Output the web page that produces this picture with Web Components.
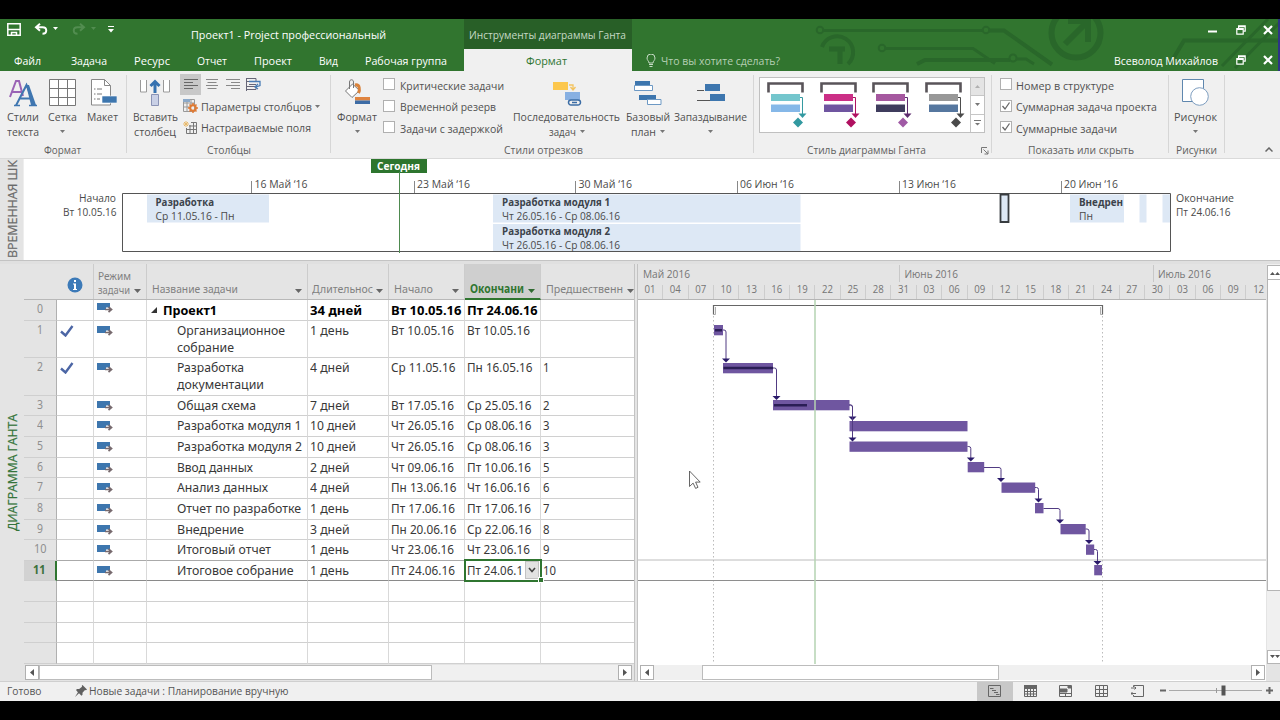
<!DOCTYPE html>
<html lang="ru">
<head>
<meta charset="utf-8">
<title>Проект1 - Project профессиональный</title>
<style>
  html, body { margin: 0; background: #000; }
  body { width: 1280px; height: 720px; overflow: hidden; font-family: "Open Sans", "Noto Sans", sans-serif; }
</style>
</head>
<body>
<project-app></project-app>

<script>
// shared base: renders its markup once into an open shadow root
class BaseElement extends HTMLElement {
  connectedCallback() {
    if (this.shadowRoot) return;
    this.attachShadow({ mode: 'open' });
    this.shadowRoot.innerHTML = this.render();
  }
  attr(name, fallback = '') {
    return this.getAttribute(name) || fallback;
  }
}

const label = (text, w, css = '') => `<fit-label w="${w}" style="${css}">${text}</fit-label>`;
const caret = (css = '') => `<svg width="5" height="3" style="flex:none;${css}"><path d="M0 0h5L2.500 3z" fill="#777"/></svg>`;

/* ---------- title bar and tabs ---------- */

const restoreIcon = `<svg width="10" height="10" viewBox="0 0 10 10" fill="none" stroke="#fff" stroke-width="1.200"><path d="M2.600 3V.8h6.600v5.400H7.500M2.600 1.600h6.600"/><path d="M.8 3.600h6.400v5.600H.8zM.8 4.400h6.400"/></svg>`;
const closeIcon = `<svg width="10" height="10" viewBox="0 0 10 10"><path d="M1 1l8 8M9 1L1 9" stroke="#fff" stroke-width="2.200"/></svg>`;

class TitleBar extends BaseElement {
  render() {
    return `
      <style>
        :host { display: block; position: relative; height: 52px; background: #31752f; color: #fff; font-size: 11.500px; overflow: hidden; }
        .row { display: flex; position: relative; }
        .top { height: 30px; }
        .tabs { height: 22px; align-items: center; }
        .quick { display: flex; width: 190.500px; padding-left: 7px; box-sizing: border-box; }
        .quick svg { flex: none; margin-top: 4px; }
        .name { width: 273.500px; padding-top: 8px; line-height: 16px; }
        .context { width: 168px; box-sizing: border-box; background: #285f27; color: #c6dac5; padding: 8px 0 0 5px; line-height: 16px; }
        .active { width: 168px; height: 22px; background: #f0f0f0; color: #2f7530; display: flex; align-items: center; justify-content: center; margin-left: 17px; padding-right: 3px; box-sizing: border-box; }
        .window { display: flex; align-items: center; }
        .deco { position: absolute; left: 800px; top: 0; }
        .edge { position: absolute; right: 0; top: 0; width: 2px; height: 52px; background: #2d3486; }
      </style>
      <svg class="deco" width="480" height="52" viewBox="800 19 480 52" fill="none" stroke="#29672a" stroke-width="3">
        <circle cx="820" cy="30" r="3.300" stroke-width="2"/><path d="M823 30.500h160"/>
        <circle cx="986" cy="30" r="3.300" stroke-width="2"/><path d="M989 30.500h15l48 34" stroke-width="4"/>
        <circle cx="882" cy="48" r="3.300" stroke-width="2"/><path d="M885 48.500h88l22 15"/>
        <path d="M917 64l8-4h85" stroke-width="4"/><circle cx="1013" cy="58" r="3.500" stroke-width="2"/><path d="M1016 59h10l8 5"/>
        <path d="M822 47a16 16 0 1 1 26 17" stroke-width="4"/><path d="M829 49h16M840 51v13" stroke-width="5"/>
        <circle cx="1076" cy="33" r="24.500" stroke-width="6"/>
        <path d="M1065 44l22-22M1068 21h20v21" stroke-width="6"/>
        <path d="M1170 64l14-23.500h96" stroke-width="4"/><path d="M1222 66l46-47M1235 68l45-46" stroke-width="3"/>
      </svg>
      <div class="row top">
        <div class="quick">
          <svg width="14" height="13" viewBox="0 0 14 13" fill="none" stroke="#fff" stroke-width="1.500"><path d="M.8.800h12.400v11.400H.8zM1 6.500h12"/><path d="M4.500 12V9.500h5V12"/></svg>
          <svg width="14" height="12" viewBox="0 0 14 12" fill="none" stroke="#fff" stroke-width="2" style="margin-left:13px"><path d="M6 .8L2 4.300l4 3.500M2 4.300h6.500c5 0 5 6.500 0 6.500"/></svg>
          <svg width="5" height="3" style="margin:8px 0 0 5px"><path d="M0 0h5L2.500 3z" fill="#fff"/></svg>
          <svg width="14" height="12" viewBox="0 0 14 12" fill="none" stroke="#528d50" stroke-width="2" style="margin-left:14px"><path d="M8 .8l4 3.500-4 3.500M12 4.300H5.500c-5 0-5 6.500 0 6.500"/></svg>
          <svg width="5" height="3" style="margin:8px 0 0 5px"><path d="M0 0h5L2.500 3z" fill="#528d50"/></svg>
          <svg width="6" height="7" style="margin:7px 0 0 12px"><path d="M0 .5h6" stroke="#fff"/><path d="M0 3h6L3 6.500z" fill="#fff"/></svg>
        </div>
        <div class="name">${label('Проект1 - Project профессиональный', 195)}</div>
        <div class="context">${label('Инструменты диаграммы Ганта', 157)}</div>
        <div class="window" style="margin-left:576px;height:21px">
          <svg width="9" height="3" style="margin-top:3px"><path d="M0 1.500h9" stroke="#fff" stroke-width="2"/></svg>
          <span style="margin:0 17px 0 19px;display:flex">${restoreIcon}</span>${closeIcon}
        </div>
      </div>
      <div class="row tabs">
        ${label('Файл', 27, 'margin-left:14px')}
        ${label('Задача', 36, 'margin-left:30px')}
        ${label('Ресурс', 36, 'margin-left:27px')}
        ${label('Отчет', 30, 'margin-left:27px')}
        ${label('Проект', 38, 'margin-left:27px')}
        ${label('Вид', 19, 'margin-left:27px')}
        ${label('Рабочая группа', 82, 'margin-left:27px')}
        <div class="active">${label('Формат', 41)}</div>
        <svg width="10" height="13" viewBox="0 0 10 13" fill="none" stroke="#c5dac4" style="margin-left:14px"><path d="M3 9C3 7 1 6.500 1 4a4 4 0 0 1 8 0c0 2.500-2 3-2 5zM3 10.500h4M3.500 12.500h3"/></svg>
        ${label('Что вы хотите сделать?', 119, 'margin-left:5px;color:#b5cfb4')}
        <div class="window" style="margin-left:334px">
          ${label('Всеволод Михайлов', 104)}
          <span style="margin:0 17px 0 18px;display:flex">${restoreIcon}</span>${closeIcon}
        </div>
      </div>
      <div class="edge"></div>`;
  }
}

/* ---------- ribbon ---------- */

class RibbonGroup extends BaseElement {
  render() {
    return `
      <style>
        :host { display: flex; flex-direction: column; flex: none; box-sizing: border-box; height: 88px; width: ${this.attr('w')}px; position: relative; }
        .body { display: flex; height: 71px; }
        .caption { height: 16px; line-height: 16px; color: #5f5f5f; padding-left: ${this.attr('cx')}px; }
        :host::after { content: ""; position: absolute; right: 0; top: 4px; width: 1px; height: 78px; background: #d6d6d6; }
      </style>
      <div class="body"><slot></slot></div>
      <div class="caption">${label(this.attr('caption'), this.attr('cw'))}</div>`;
  }
}

// big button: slotted icon above one or two caption lines
class RibbonButton extends BaseElement {
  render() {
    const [first, w1, second, w2] = this.attr('lines').split('|');
    const drop = this.hasAttribute('drop');
    return `
      <style>
        :host { display: flex; flex-direction: column; align-items: center; flex: none; width: ${this.attr('w')}px; }
        .icon { height: 31px; display: flex; align-items: center; padding-top: 6px; }
        .line { display: flex; align-items: center; justify-content: center; height: 15px; line-height: 15px; }
      </style>
      <div class="icon"><slot></slot></div>
      <div class="line" style="margin-top:1px">${label(first, w1)}</div>
      <div class="line">${second ? label(second, w2) : ''}${drop ? caret(second ? 'margin-left:4px' : '') : ''}</div>`;
  }
}

class CheckItem extends BaseElement {
  render() {
    return `
      <style>
        :host { display: flex; align-items: center; height: 21.500px; }
        .box { width: 10px; height: 10px; border: 1px solid #b0b0b0; background: #fff; margin-right: ${this.attr('gap', '5')}px; flex: none; display: flex; position: relative; top: -1px; }
      </style>
      <div class="box">${this.hasAttribute('on') ? '<svg width="10" height="10"><path d="M1.500 5l2.500 3L8.500 1.500" fill="none" stroke="#666" stroke-width="1.300"/></svg>' : ''}</div>
      ${label(this.attr('text'), this.attr('w'))}`;
  }
}

class StyleGallery extends BaseElement {
  render() {
    const looks = [
      ['#74c6cd', '#86b8e8', '#3299a0', '#3299a0'],
      ['#cb2f86', '#6f55a0', '#b01060', '#b01060'],
      ['#a5589f', '#3f3c5d', '#5d2b6e', '#a05aa5'],
      ['#989898', '#56779f', '#4a4a4a', '#4a4a4a']
    ];
    const items = looks.map(([a, b, line, mark]) => `
      <svg width="52.600" height="54" viewBox="0 1 52.600 54">
        <path d="M8.500 15.500V6.500h34v9" fill="none" stroke="#595459" stroke-width="2.600"/>
        <path d="M11 17h29v7H11z" fill="${a}"/><path d="M11 27.500h29V35H11z" fill="${b}"/>
        <path d="M40 20.500h2.500V37" fill="none" stroke="${line}"/>
        <path d="M38.500 36.500h8l-4 4.500z" fill="${line}"/><path d="M38 40.500l5 5-5 5-5-5z" fill="${mark}"/>
      </svg>`).join('');
    return `
      <style>
        :host { display: flex; margin: 6px 0 0 5px; width: 224px; height: 54px; border: 1px solid #c0c0c0; background: #fff; }
        .items { display: flex; width: 210.400px; }
        .side { display: flex; flex-direction: column; flex: 1; border-left: 1px solid #c6c6c6; }
        .side div { flex: 1; display: flex; align-items: center; justify-content: center; }
        .side div + div { border-top: 1px solid #c6c6c6; }
      </style>
      <div class="items">${items}</div>
      <div class="side">
        <div style="background:#e4e4e4"><svg width="5" height="3"><path d="M0 3h5L2.500 0z" fill="#b0b0b0"/></svg></div>
        <div>${caret()}</div>
        <div><svg width="7" height="6"><path d="M0 .5h7" stroke="#777"/><path d="M1 3h5L3.500 5.500z" fill="#777"/></svg></div>
      </div>`;
  }
}

class RibbonBar extends BaseElement {
  render() {
    return `
      <style>
        :host { display: flex; height: 87px; background: #f0f0f0; border-bottom: 1px solid #dadada; font-size: 11.500px; color: #505050; overflow: hidden; }
        .col { display: flex; flex-direction: column; padding-top: 3.500px; }
        .line { display: flex; align-items: center; height: 21.500px; }
        .align { display: flex; width: 21px; height: 21px; align-items: center; justify-content: center; }
        .align.on { background: #c8c8c8; }
        .end { display: flex; align-items: flex-end; justify-content: center; width: 55px; padding: 0 0 6px 32px; box-sizing: border-box; }
      </style>
      <ribbon-group w="127" caption="Формат" cx="44" cw="37">
        <ribbon-button w="42" lines="Стили|32|текста|32" style="margin-left:2px">
          <svg width="28" height="28" viewBox="0 0 28 28" fill="none"><path d="M1 18L7 2h3l4 15M3 13h9" stroke="#9a63b5" stroke-width="2"/><path d="M7 26.500L17.500 6l8 20.500M11 19.500h11" stroke="#3f76b0" stroke-width="2"/><path d="M17 6h3l7 20h-5z" fill="#3f76b0"/><path d="M5 26.500h6M20 26.500h8" stroke="#3f76b0" stroke-width="1.500"/></svg>
        </ribbon-button>
        <ribbon-button w="37" lines="Сетка|29" drop>
          <svg width="27" height="27"><path d="M.5.500h26v26H.5z" fill="#fff" stroke="#777"/><path d="M9.500 0v27M18.500 0v27M0 9.500h27M0 18.500h27" stroke="#777"/></svg>
        </ribbon-button>
        <ribbon-button w="42" lines="Макет|31">
          <svg width="26" height="27" viewBox="0 0 26 27" style="margin-left:4px"><path d="M.5.500h13l6 6v19.500H.5z" fill="#fff" stroke="#888"/><path d="M13.500.5v6h6" fill="none" stroke="#888"/><path d="M3 10h1.500M6 10h5M3 15h1.500M6 15h5M3 20h1.500M6 20h3" stroke="#777"/><path d="M11 17h15v7H11z" fill="#3d76ae" stroke="#fff" stroke-width=".6"/></svg>
        </ribbon-button>
      </ribbon-group>
      <ribbon-group w="204" caption="Столбцы" cx="80" cw="44">
        <ribbon-button w="50" lines="Вставить|45|столбец|42" style="margin-left:3px">
          <svg width="30" height="27" viewBox="0 0 30 27"><path d="M.5 1v12h6V1M29.500 1v12h-6V1" fill="#fff" stroke="#999"/><path d="M15 14V3M10.500 7L15 2.500 19.500 7" fill="none" stroke="#3672b0" stroke-width="3"/><path d="M11.500 15.500h7v11h-7z" fill="#c9d0e6" stroke="#8a93b5"/></svg>
        </ribbon-button>
        <div class="col" style="padding-top:3px">
          <div class="line">
            <div class="align on"><svg width="14" height="11"><path d="M0 .5h14M0 3.500h9M0 6.500h14M0 9.500h9" stroke="#666"/></svg></div>
            <div class="align"><svg width="14" height="11"><path d="M1 .5h12M2.500 3.500h9M1 6.500h12M2.500 9.500h9" stroke="#888"/></svg></div>
            <div class="align"><svg width="14" height="11"><path d="M0 .5h14M5 3.500h9M0 6.500h14M5 9.500h9" stroke="#888"/></svg></div>
            <div class="align"><svg width="16" height="15" fill="none"><path d="M.5 1v13M1 1.500h9v3H1M3 7.500h7M1 9.500h9v3H1" stroke="#667"/><path d="M3 4.500h11v4l-4 1.500M12 7l-3 3 3 2" stroke="#4a7db5" stroke-width="1.300"/></svg></div>
          </div>
          <div class="line">
            <svg width="17" height="16" viewBox="0 0 17 16" fill="none" style="margin-left:2px"><path d="M1.500 1.500h11v12h-11zM5 1.500v12M9 1.500v6M1.500 5h11M1.500 9h6" stroke="#999"/><path d="M1 1h7v3H1z" fill="#8ba9c9"/><circle cx="11" cy="10" r="2.800" stroke="#df7a33" stroke-width="2"/><path d="M11 5v2M11 13v2M6 10h2M14 10h2M7.500 6.500l1.500 1.500M14.500 6.500L13 8M7.500 13.500L9 12M14.500 13.500L13 12" stroke="#df7a33" stroke-width="1.500"/></svg>
            ${label('Параметры столбцов', 111, 'margin-left:2px')}${caret('margin-left:3px')}
          </div>
          <div class="line">
            <svg width="17" height="15" viewBox="0 0 17 15" fill="none" style="margin-left:2px"><path d="M4.500 8v5.500h10v-11H9M4.500 9.500h10M8 5v8M11.500 3v10M7 6h7" stroke="#777"/><path d="M4 1v6M1 4h6M2 2l4 4M6 2L2 6" stroke="#e8b96a"/></svg>
            ${label('Настраиваемые поля', 110, 'margin-left:2px')}
          </div>
        </div>
      </ribbon-group>
      <ribbon-group w="423" caption="Стили отрезков" cx="172.500" cw="79">
        <ribbon-button w="44" lines="Формат|40" drop style="margin-left:4px">
          <svg width="27" height="27" viewBox="0 0 27 27" fill="none"><path d="M1.500 12l7-7 7 6.500-7.500 7z" fill="#fff" stroke="#777"/><path d="M5.500 10V3c0-3 4-3 4 0v6" stroke="#777"/><path d="M11 6c5-1 5 5 3.500 8" stroke="#d9823b" stroke-width="3"/><path d="M11 18h15v3.500H11z" fill="#df8440"/><path d="M11 21.500h15V25H11z" fill="#3d6ca5"/></svg>
        </ribbon-button>
        <div class="col" style="margin-left:4px">
          <check-item text="Критические задачи" w="104"></check-item>
          <check-item text="Временной резерв" w="96"></check-item>
          <check-item text="Задачи с задержкой" w="103"></check-item>
        </div>
        <ribbon-button w="108" lines="Последовательность|107|задач|27" drop style="margin-left:8.500px">
          <svg width="30" height="27" viewBox="0 0 30 27" fill="none"><path d="M1 3h15v8H1z" fill="#fcc74d"/><path d="M17 6h4v4M18.500 8l2.500 3 2.500-3" stroke="#f3c35f" stroke-width="1.300"/><path d="M13 13h15v8H13z" fill="#87b0e2"/><path d="M22 21h-3a2 2 0 0 0 0 5h3M22 21h4a2 2 0 0 1 0 5h-4M20 23.500h5" stroke="#3c6da5" stroke-width="1.500"/></svg>
        </ribbon-button>
        <ribbon-button w="54" lines="Базовый|44|план|25" drop>
          <svg width="28" height="26" viewBox="0 0 28 26"><path d="M1 1h15v5H1z" fill="#3d76ae"/><path d="M.5 5.500h18v5H.5z" fill="#fff" stroke="#6d99c4"/><path d="M5 15h17v5H5z" fill="#3d76ae"/><path d="M13.500 19.500H27v5H13.500z" fill="#fff" stroke="#6d99c4"/></svg>
        </ribbon-button>
        <ribbon-button w="72" lines="Запаздывание|73" drop>
          <svg width="28" height="22" viewBox="0 0 28 22"><path d="M0 8.500h7M0 18.500h13" stroke="#555"/><path d="M8 2h15v7H8zM13 12h15v7H13z" fill="#3d76ae"/></svg>
        </ribbon-button>
      </ribbon-group>
      <ribbon-group w="238" caption="Стиль диаграммы Ганта" cx="52.500" cw="119">
        <style-gallery></style-gallery>
        <svg width="8" height="8" style="position:absolute;left:227px;top:76px" fill="none" stroke="#777"><path d="M.5 6V.5H6M2.500 2.500L7 7M7 3.500V7H3.500"/></svg>
      </ribbon-group>
      <ribbon-group w="177" caption="Показать или скрыть" cx="35.500" cw="106">
        <div class="col" style="margin-left:8px">
          <check-item text="Номер в структуре" w="98" gap="4"></check-item>
          <check-item text="Суммарная задача проекта" w="141" gap="4" on></check-item>
          <check-item text="Суммарные задачи" w="101" gap="4" on></check-item>
        </div>
      </ribbon-group>
      <ribbon-group w="56" caption="Рисунки" cx="6.500" cw="41">
        <ribbon-button w="52" lines="Рисунок|43" drop>
          <svg width="27" height="27" fill="#fff"><path d="M.5.500h21v22H.5z" stroke="#5f87ae"/><circle cx="17.500" cy="17.500" r="8.800" stroke="#7d9dbf"/></svg>
        </ribbon-button>
      </ribbon-group>
      <div class="end"><svg width="8" height="5"><path d="M.5 4.500L4 1l3.500 3.500" fill="none" stroke="#666" stroke-width="1.500"/></svg></div>`;
  }
}

/* ---------- timeline ---------- */

const svgText = (x, y, w, text, extra = '') =>
  `<text x="${x}" y="${y}" textLength="${w}" lengthAdjust="spacingAndGlyphs" ${extra}>${text}</text>`;

class TimelineView extends BaseElement {
  render() {
    const ticks = [[252, '16 Май ‘16', 53], [414.500, '23 Май ‘16', 53], [576, '30 Май ‘16', 53.500], [737.500, '06 Июн ‘16', 54], [899.500, '13 Июн ‘16', 54], [1061.500, '20 Июн ‘16', 54]];
    const bold = 'font-weight="700" fill="#3c434b"';
    return `
      <style>
        :host { display: flex; height: 101px; background: #fff; border-bottom: 1px solid #c3c3c3; }
        .side { width: 23px; background: #e4e4e4; border-right: 1px solid #eee; overflow: hidden; }
        svg { display: block; font-size: 11px; fill: #4a4a4a; }
      </style>
      <div class="side"><svg width="23" height="101"><text transform="translate(17 99) rotate(-90)" font-size="12.500" textLength="98" lengthAdjust="spacingAndGlyphs" fill="#6a6a6a" stroke="#6a6a6a" stroke-width=".2">ВРЕМЕННАЯ ШК</text></svg></div>
      <svg width="1256" height="101" viewBox="24 159 1256 101">
        <path d="M147 194.500h122v28H147zM493 194.500h307.500v28H493zM493 224h307.500v27H493zM1070 194.500h54v28h-54zM1139.500 194.500h7v28h-7zM1162.500 194.500h8v28h-8z" fill="#dde8f5"/>
        <path d="M122.500 193.500h1048v58h-1048z" fill="none" stroke="#555"/>
        <path d="M1000.500 194.500h8v27.500h-8z" fill="#dde8f5" stroke="#383c40" stroke-width="1.800"/>
        ${ticks.map(([x, t, w]) => `<path d="M${Math.round(x) - .5} 181v12" stroke="#888"/>${svgText(x + 2.500, 188, w, t)}`).join('')}
        ${svgText(79, 202, 37, 'Начало')}
        ${svgText(63, 216, 53.500, 'Вт 10.05.16')}
        ${svgText(1176, 202, 58, 'Окончание')}
        ${svgText(1176, 216, 54.500, 'Пт 24.06.16')}
        ${svgText(155.500, 206, 58.500, 'Разработка', bold)}
        ${svgText(155.500, 220, 79, 'Ср 11.05.16 - Пн')}
        ${svgText(502, 206, 108, 'Разработка модуля 1', bold)}
        ${svgText(502, 220, 118, 'Чт 26.05.16 - Ср 08.06.16')}
        ${svgText(502, 235, 108, 'Разработка модуля 2', bold)}
        ${svgText(502, 249, 118, 'Чт 26.05.16 - Ср 08.06.16')}
        ${svgText(1079, 206, 44, 'Внедрен', bold)}
        ${svgText(1079, 220, 14, 'Пн')}
        <path d="M371 159h56v14h-56z" fill="#2d752e"/>
        <path d="M399.500 172v81" stroke="#4e8a4f"/>
        ${svgText(377, 170, 43, 'Сегодня', 'font-weight="700" fill="#fff"')}
      </svg>`;
  }
}

/* ---------- task sheet ---------- */

// name lines are [text, width]; heights follow the wrapped text
const tasks = [
  { h: 21, name: [['Проект1', 54]], dur: ['34 дней', 52], start: 'Вт 10.05.16', end: 'Пт 24.06.16', pred: '', bold: true },
  { h: 37, name: [['Организационное', 108], ['собрание', 57]], dur: ['1 день', 39], start: 'Вт 10.05.16', end: 'Вт 10.05.16', pred: '', done: true },
  { h: 38, name: [['Разработка', 67], ['документации', 87]], dur: ['4 дней', 39.5], start: 'Ср 11.05.16', end: 'Пн 16.05.16', pred: '1', done: true },
  { h: 20, name: [['Общая схема', 79]], dur: ['7 дней', 39.5], start: 'Вт 17.05.16', end: 'Ср 25.05.16', pred: '2' },
  { h: 21, name: [['Разработка модуля 1', 124.5]], dur: ['10 дней', 46], start: 'Чт 26.05.16', end: 'Ср 08.06.16', pred: '3' },
  { h: 21, name: [['Разработка модуля 2', 125]], dur: ['10 дней', 46], start: 'Чт 26.05.16', end: 'Ср 08.06.16', pred: '3' },
  { h: 20, name: [['Ввод данных', 76]], dur: ['2 дней', 39.5], start: 'Чт 09.06.16', end: 'Пт 10.06.16', pred: '5' },
  { h: 21, name: [['Анализ данных', 91]], dur: ['4 дней', 39.5], start: 'Пн 13.06.16', end: 'Чт 16.06.16', pred: '6' },
  { h: 21, name: [['Отчет по разработке', 124]], dur: ['1 день', 39], start: 'Пт 17.06.16', end: 'Пт 17.06.16', pred: '7' },
  { h: 20, name: [['Внедрение', 67]], dur: ['3 дней', 39.5], start: 'Пн 20.06.16', end: 'Ср 22.06.16', pred: '8' },
  { h: 21, name: [['Итоговый отчет', 94]], dur: ['1 день', 39], start: 'Чт 23.06.16', end: 'Чт 23.06.16', pred: '9' },
  { h: 20, name: [['Итоговое собрание', 116.5]], dur: ['1 день', 39], start: 'Пт 24.06.16', end: 'Пт 24.06.1', pred: '10', selected: true }
];
const dateWidth = { 'Вт': 63, 'Ср': 64.5, 'Чт': 63, 'Пн': 65.5, 'Пт': 64 };
const dateLabel = (d, bold) => label(d, d.length < 11 ? 56 : bold ? 70.500 : dateWidth[d.slice(0, 2)]);

class TaskSheet extends BaseElement {
  row(t, i) {
    const mode = `<svg width="16" height="11" viewBox="0 0 16 11"><path d="M0 1h13v4.500H9V8H0z" fill="#3d76ae"/><path d="M8 7.500h6M11.500 5l3 2.500-3 2.500" fill="none" stroke="#776a6e" stroke-width="1.700"/></svg>`;
    const check = `<svg width="14" height="12"><path d="M1 6.500l4.500 4L12.500 1" fill="none" stroke="#4c66a5" stroke-width="2.400"/></svg>`;
    return `
      <div class="row ${t.bold ? 'bold' : ''} ${t.selected ? 'selected' : ''} ${i === 10 ? 'before' : ''}" style="height:${t.h}px">
        <div class="num">${label(i, i > 9 ? 12.500 : 6)}</div>
        <div class="cell info">${t.done ? check : ''}</div>
        <div class="cell mode">${mode}</div>
        <div class="cell name">${t.bold ? '<svg width="6" height="6"><path d="M6 0v6H0z" fill="#333"/></svg>' : ''}<div>${t.name.map(([s, w]) => `<div>${label(s, w)}</div>`).join('')}</div></div>
        <div class="cell dur">${label(...t.dur)}</div>
        <div class="cell start">${dateLabel(t.start, t.bold)}</div>
        <div class="cell end">${dateLabel(t.end, t.bold)}${t.selected ? '<span class="pick"><svg width="8" height="6"><path d="M1 1l3 3.500L7 1" fill="none" stroke="#444" stroke-width="1.600"/></svg></span><i></i>' : ''}</div>
        <div class="cell pred">${t.pred ? label(t.pred, t.pred.length * 6.500) : ''}</div>
      </div>`;
  }
  render() {
    const blank = [21, 21, 20, 21].map(h => `
      <div class="row" style="height:${h}px"><div class="num"></div>${['info', 'mode', 'name', 'dur', 'start', 'end', 'pred'].map(c => `<div class="cell ${c}"></div>`).join('')}</div>`).join('');
    const arrow = '<svg class="arrow" width="7" height="4"><path d="M0 0h7L3.500 4z" fill="#666"/></svg>';
    return `
      <style>
        :host { display: block; width: 610px; flex: none; font-size: 13px; color: #383838; font-family: "Noto Sans", "Open Sans", sans-serif; }
        .row, .head { display: flex; box-sizing: border-box; }
        .head { height: 36px; background: #e4e4e4; border-bottom: 1px solid #b8b8b8; color: #808080; font-size: 11.500px; }
        .head > div { box-sizing: border-box; border-right: 1px solid #ccc; position: relative; padding-top: 17px; line-height: 16px; flex: none; }
        .arrow { position: absolute; right: 2px; top: 25px; }
        .num { width: 33px; background: #e4e4e4; color: #8f8f8f; font-size: 12px; line-height: 17px; text-align: center; border-right: 1px solid #b0b0b0; border-bottom: 1px solid #cfcfcf; box-sizing: border-box; flex: none; }
        .cell { background: #fff; border-right: 1px solid #d9d9d9; border-bottom: 1px solid #d0d0d0; box-sizing: border-box; flex: none; line-height: 17px; padding-top: 1px; position: relative; white-space: nowrap; }
        .info { width: 37px; } .mode { width: 53px; } .name { width: 161px; } .dur { width: 81px; } .start { width: 76px; } .end { width: 76px; } .pred { width: 93px; border-right: 0; }
        .cell.info { padding: 3px 0 0 3px; }
        .cell.mode { padding: 4px 0 0 3px; line-height: 0; }
        .cell.name { padding-left: 30px; }
        .cell.dur { padding-left: 1.500px; } .cell.start, .cell.end, .cell.pred { padding-left: 2px; }
        .bold { font-weight: 700; color: #000; }
        .bold .cell { padding-top: 2px; }
        .bold .num { font-weight: 400; }
        .bold .name { display: flex; padding-left: 4px; }
        .bold .name svg { margin: 5px 5.500px 0 0; }
        .before .cell { border-bottom-color: #aaa; }
        .selected .cell { border-bottom-color: #8a8a8a; }
        .selected .num { background: #d2d2d2; color: #3b713b; font-weight: 700; border-right: 2px solid #2f7530; }
        /* active cell frame lies over its neighbours' borders */
        .selected .end { overflow: visible; z-index: 1; }
        .selected .end::before { content: ""; position: absolute; left: -1px; top: -2px; width: 74px; height: 19px; border: 2px solid #2f7530; }
        .pick { position: absolute; left: 60px; top: 0; width: 14px; height: 18px; background: #e2e2e2; border: 1px solid #c2c2c2; box-sizing: border-box; display: flex; align-items: center; justify-content: center; }
        .selected i { position: absolute; right: -4px; bottom: -3px; width: 4px; height: 4px; background: #2f7530; border: 1px solid #fff; }
        .cur { background: #cfcfcf; color: #2f7530; font-weight: 700; border-bottom: 2px solid #2f7530; height: 36px; }
      </style>
      <div class="head">
        <div style="width:33px;border-right-color:transparent"></div>
        <div style="width:37px;padding:13px 0 0 10px"><svg width="16" height="16"><circle cx="8" cy="8" r="7.500" fill="#3c7ab8"/><path d="M7 3h2v2H7zM6 6.500h3V12h1v1H6v-1h1V7.500H6z" fill="#fff"/></svg></div>
        <div style="width:53px;padding:5px 0 0 4px;line-height:14px">${label('Режим', 33)}<br>${label('задачи', 32)}${arrow.replace('class="arrow"', 'class="arrow" style="right:5px"')}</div>
        <div style="width:161px;padding-left:5px">${label('Название задачи', 86)}${arrow.replace('class="arrow"', 'class="arrow" style="right:5px"')}</div>
        <div style="width:81px;padding-left:4px">${label('Длительнос', 61)}${arrow.replace('class="arrow"', 'class="arrow" style="right:5px"')}</div>
        <div style="width:76px;padding-left:5px">${label('Начало', 39)}${arrow.replace('class="arrow"', 'class="arrow" style="right:5px"')}</div>
        <div class="cur" style="width:76px;padding-left:5px">${label('Окончани', 54)}${arrow.replace('class="arrow"', 'class="arrow" style="right:5px"').replace('#666', '#2f6a30')}</div>
        <div style="width:93px;padding-left:5px;border:0">${label('Предшественн', 77)}${arrow.replace('class="arrow"', 'class="arrow" style="right:0"')}</div>
      </div>
      ${tasks.map((t, i) => this.row(t, i)).join('')}
      ${blank}`;
  }
}

/* ---------- gantt chart ---------- */

class GanttChart extends BaseElement {
  render() {
    const days = ['01', '04', '07', '10', '13', '16', '19', '22', '25', '28', '31', '03', '06', '09', '12', '15', '18', '21', '24', '27', '30', '03', '06', '09', '12'];
    // x, y, width
    const bars = [[714, 325, 9], [723, 363, 50], [773, 400, 76.5], [849.5, 421, 118], [849.5, 441.5, 118], [967.7, 462, 16.5], [1001.5, 482.5, 33.7], [1035, 503, 8.5], [1060.5, 524, 25.2], [1086, 544.5, 8.2], [1094.2, 565, 7.8]];
    // start x, start y, arrow x, arrow tip y
    const links = [[723, 330, 726, 362.5], [773, 368, 776.5, 400], [849, 405, 852.5, 420.5], [849, 405, 852.5, 441.5], [967.5, 446.5, 970.8, 461.5], [984, 467.5, 1001, 482], [1035, 487.5, 1038.5, 502.5], [1043.5, 508.5, 1060, 523.5], [1085.5, 529, 1089, 544], [1094, 549.5, 1097.5, 565]];
    return `
      <style>
        :host { display: block; width: 628px; flex: none; background: #fff; }
        svg { display: block; font-size: 10.500px; fill: #757575; }
      </style>
      <svg width="628" height="36" viewBox="638 264 628 36">
        <path d="M638 264h628v36H638z" fill="#e4e4e4"/><path d="M638 299.500h628" stroke="#b5b5b5"/>
        <path d="M899.500 265v17M1153.500 265v17" stroke="#c8c8c8"/>
        ${svgText(643, 278, 47, 'Май 2016', 'font-size="11"')}
        ${svgText(904.500, 278, 53.500, 'Июнь 2016', 'font-size="11"')}
        ${svgText(1158, 278, 53, 'Июль 2016', 'font-size="11"')}
        ${days.map((d, i) => `<path d="M${Math.round(663.2 + i * 25.36) - .5} 285v14" stroke="#cdcdcd"/>${svgText(644.500 + i * 25.36, 293, 11, d)}`).join('')}
      </svg>
      <svg width="628" height="364" viewBox="638 300 628 364">
        <path d="M713.500 316v348M1102.500 316v348" stroke="#bbb" stroke-dasharray="1.500 2.500"/>
        <path d="M638 560h628" stroke="#bcbcbc"/><path d="M638 580.500h628" stroke="#8e8e8e"/>
        <path d="M713.500 314.500V305.500h389v9" fill="none" stroke="#666" stroke-width="1.200"/>
        <path d="M715.500 307v7.500h-2M1100.500 307v7.500h2" fill="none" stroke="#999" stroke-width=".8"/>
        ${bars.map(([x, y, w]) => `<rect x="${x}" y="${y}" width="${w}" height="10.300" fill="#6f56a0"/>`).join('')}
        <path d="M715 330.200h7M723.500 368h49.500M774 405.300h33" stroke="#2a1d55" stroke-width="2.600"/>
        ${links.map(([x, y, ax, ay]) => `<path d="M${x} ${y}H${ax - 2}q2 0 2 2V${ay - 3}" fill="none" stroke="#513b82"/><path d="M${ax - 4} ${ay - 4}h8l-4 4z" fill="#2a1a6a"/>`).join('')}
        <path d="M815 300v364" stroke="#b4d3b2" stroke-width="1.500"/>
        <path d="M689.500 471v15.500l3.600-3.400 2.500 5.300 2.400-1.100-2.400-5.200h4.600z" fill="#fff" stroke="#555" stroke-width=".9"/>
      </svg>`;
  }
}

class ScrollBar extends BaseElement {
  render() {
    const [before, thumb] = this.attr('thumb').split(' ');
    return `
      <style>
        :host { display: flex; height: 15px; box-sizing: border-box; background: #f0f0f0; }
        .btn { width: 12px; height: 13px; border: 1px solid #b0b0b0; background: #fff; display: flex; align-items: center; justify-content: center; flex: none; }
        .thumb { height: 13px; box-sizing: content-box; border: 1px solid #bcbcbc; background: #fff; margin-left: ${before}px; width: ${thumb}px; }
        .space { flex: 1; }
      </style>
      <div class="btn"><svg width="4" height="7"><path d="M4 0v7L0 3.500z" fill="#555"/></svg></div>
      <div class="thumb"></div><div class="space"></div>
      <div class="btn"><svg width="4" height="7"><path d="M0 0v7l4-3.500z" fill="#555"/></svg></div>`;
  }
}

class WorkArea extends BaseElement {
  render() {
    return `
      <style>
        :host { display: flex; height: 417px; background: #e4e4e4; }
        .side { width: 24px; flex: none; }
        .left { display: flex; flex-direction: column; width: 610px; }
        .left scroll-bar { margin: 1px 2px 0 1px; }
        .split { width: 2px; background: #e4e4e4; border: 1px solid #c3c3c3; border-width: 0 1px; flex: none; }
        .right { display: flex; flex-direction: column; width: 628px; background: #fff; }
        .right scroll-bar { margin: 1px 1px 0 2px; }
        .vertical { display: flex; flex-direction: column; flex: 1; margin-left: 1px; height: 400px; background: #f0f0f0; overflow: hidden; }
        .vertical div { width: 24px; box-sizing: border-box; border: 1px solid #b5b5b5; background: #fff; display: flex; align-items: center; padding-left: 2px; flex: none; }
      </style>
      <div class="side"><svg width="24" height="417" viewBox="0 264 24 417"><text transform="translate(16.500 531) rotate(-90)" font-size="12" textLength="117" lengthAdjust="spacingAndGlyphs" fill="#34743a" stroke="#34743a" stroke-width=".2">ДИАГРАММА ГАНТА</text></svg></div>
      <div class="left"><task-sheet></task-sheet><scroll-bar thumb="0 391"></scroll-bar></div>
      <div class="split"></div>
      <div class="right"><gantt-chart></gantt-chart><scroll-bar thumb="48 295"></scroll-bar></div>
      <div class="vertical">
        <div style="height:15px;margin-top:1px"><svg width="10" height="4"><path d="M0 4l2.500-3L5 4zM5 4l2.500-3L10 4z" fill="#555"/></svg></div>
        <div style="height:311px;border-top:0"></div>
        <div style="height:14px;margin-top:59px"><svg width="10" height="4"><path d="M0 0l2.500 3L5 0zM5 0l2.500 3L10 0z" fill="#555"/></svg></div>
      </div>`;
  }
}

/* ---------- status bar ---------- */

class StatusBar extends BaseElement {
  render() {
    return `
      <style>
        :host { display: flex; align-items: center; height: 20px; box-sizing: border-box; background: #f0f0f0; border-top: 1px solid #cfcfcf; color: #555; font-size: 11px; overflow: hidden; }
        fit-label { position: relative; top: -1px; }
        .view { display: flex; align-items: center; justify-content: center; width: 35.600px; height: 20px; flex: none; }
        .view svg { margin-top: -2px; }
        .on { background: #c8c8c8; }
        svg { flex: none; fill: none; stroke: #666; }
      </style>
      ${label('Готово', 34.500, 'margin-left:7px')}
      <svg width="12" height="12" viewBox="0 0 12 12" style="margin:-2px 0 0 33px;stroke:none;fill:#606060"><path d="M7.500 0L12 4.500l-1 .8-1-.2-2.500 2.700v2l-1 1L4 8.300 0 12l2.900-4.700L1 5l1-1h2.200L7 1.800 6.800.8z"/></svg>
      ${label('Новые задачи : Планирование вручную', 199.500, 'margin-left:2px')}
      <div class="view on" style="margin-left:689px"><svg width="13" height="12"><path d="M.5.500h12v11H.5zM2 3.500h3.500M4 5.500h4M6 7.500h4M8 9.500h3.500"/></svg></div>
      <div class="view"><svg width="13" height="12"><path d="M.5.500h12v11H.5zM3.500 4v8M6.500 4v8M9.500 4v8M1 6.500h12M1 9h12"/><path d="M0 0h13v3.500H0z" fill="#666"/></svg></div>
      <div class="view"><svg width="13" height="12"><path d="M.5.500h12v11H.5zM0 8.500h13M6.500 8v3"/><path d="M1 4h7v3H1zM9 1h3v2H9z" fill="#666"/></svg></div>
      <div class="view"><svg width="13" height="12"><path d="M.5.500h12v11H.5zM4.500 0v12M8.500 0v12M0 4.500h13M0 8.500h13"/></svg></div>
      <div class="view"><svg width="13" height="12"><path d="M2.500 2V.5h10v11h-10V10M0 3h5M3.500 1.500L5 3 3.500 4.500M5 8.500H0M1.500 7L0 8.500 1.500 10"/></svg></div>
      <svg width="120" height="20" style="margin:-2px 0 0 4px"><path d="M1 9.500h6" stroke-width="2"/><path d="M10 9.500h93" stroke="#aaa"/><path d="M57.500 7v5" stroke="#999"/><path d="M62.500 4.500h4v10h-4z" fill="#555" stroke="none"/><path d="M107 9.500h7M110.500 6v7" stroke-width="2"/></svg>`;
  }
}

class ProjectApp extends BaseElement {
  render() {
    return `
      <style>
        :host { display: flex; flex-direction: column; width: 1280px; height: 701px; padding-top: 19px; box-sizing: border-box; }
        .gap { height: 3px; background: #e0e0e0; flex: none; }
        title-bar, ribbon-bar, timeline-view, work-area, status-bar { flex: none; }
      </style>
      <title-bar></title-bar>
      <ribbon-bar></ribbon-bar>
      <timeline-view></timeline-view>
      <div class="gap"></div>
      <work-area></work-area>
      <status-bar></status-bar>`;
  }
}

// one-line text squeezed or stretched to the given width
class FitLabel extends BaseElement {
  connectedCallback() {
    super.connectedCallback();
    const span = this.shadowRoot.querySelector('span');
    const natural = span.offsetWidth ? span.getBoundingClientRect().width : 0;
    if (natural) span.style.transform = `scaleX(${this.attr('w') / natural})`;
  }
  render() {
    return `
      <style>
        :host { display: inline-block; flex: none; width: ${this.attr('w')}px; white-space: nowrap; text-align: left; vertical-align: top; }
        span { display: inline-block; transform-origin: 0 50%; }
      </style>
      <span><slot></slot></span>`;
  }
}

customElements.define('title-bar', TitleBar);
customElements.define('ribbon-group', RibbonGroup);
customElements.define('ribbon-button', RibbonButton);
customElements.define('check-item', CheckItem);
customElements.define('style-gallery', StyleGallery);
customElements.define('ribbon-bar', RibbonBar);
customElements.define('timeline-view', TimelineView);
customElements.define('task-sheet', TaskSheet);
customElements.define('gantt-chart', GanttChart);
customElements.define('scroll-bar', ScrollBar);
customElements.define('work-area', WorkArea);
customElements.define('status-bar', StatusBar);
customElements.define('project-app', ProjectApp);
// last, so that every label measures with its final inherited font
customElements.define('fit-label', FitLabel);
</script>
</body>
</html>
